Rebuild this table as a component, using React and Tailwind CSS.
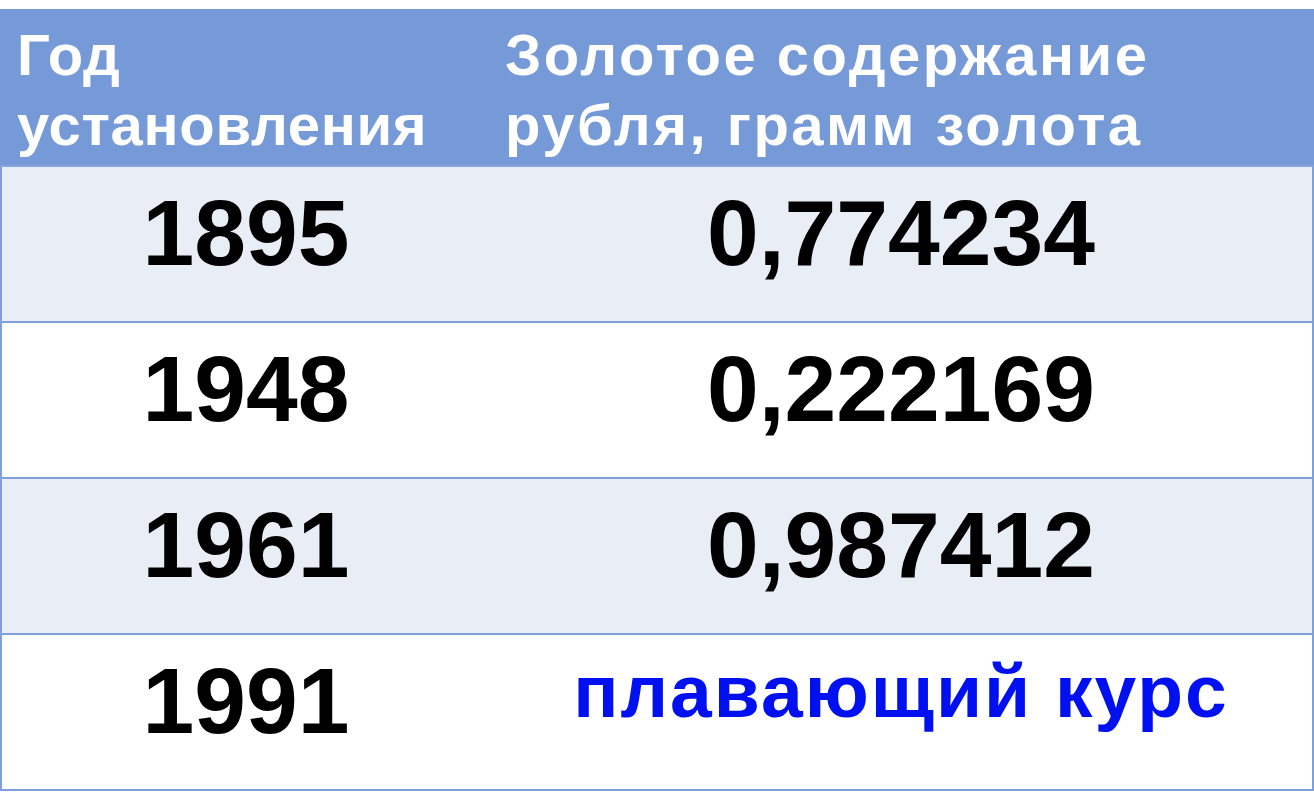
import React from 'react';

const rows = [
  { year: '1895', value: '0,774234', bg: 'bg-[#e9edf6]' },
  { year: '1948', value: '0,222169', bg: 'bg-white' },
  { year: '1961', value: '0,987412', bg: 'bg-[#e9edf6]' },
  { year: '1991', value: 'плавающий курс', bg: 'bg-white', floating: true }
];

const App = () => {
  return (
    <div className="w-[1314px] h-[808px] bg-white pt-[9px] font-['Liberation_Sans',Arial,sans-serif] font-bold">
      {/* Header */}
      <div className="flex h-[158px] bg-[#7699d8] text-white text-[58px] leading-[70px] border-b-2 border-[#86a3dc]">
        <div className="w-[490px] pl-[17px] pt-[11px] tracking-[0.7px]">
          Год<br />установления
        </div>
        <div className="flex-1 pl-[15px] pt-[11px] tracking-[2.5px]">
          Золотое содержание<br />рубля, грамм золота
        </div>
      </div>

      {/* Rows */}
      {rows.map((row) => (
        <div
          key={row.year}
          className={`flex h-[156px] ${row.bg} border-l-2 border-r-2 border-b-2 border-[#7f9edc]`}
        >
          <div className="w-[488px] pt-[20px] text-center text-black text-[93px] leading-none">
            {row.year}
          </div>
          <div
            className={
              row.floating
                ? 'flex-1 pt-[19px] text-center text-[#0010f0] text-[75px] leading-none tracking-[2px]'
                : 'flex-1 pt-[20px] text-center text-black text-[93px] leading-none'
            }
          >
            {row.value}
          </div>
        </div>
      ))}
    </div>
  );
};

export default App;
